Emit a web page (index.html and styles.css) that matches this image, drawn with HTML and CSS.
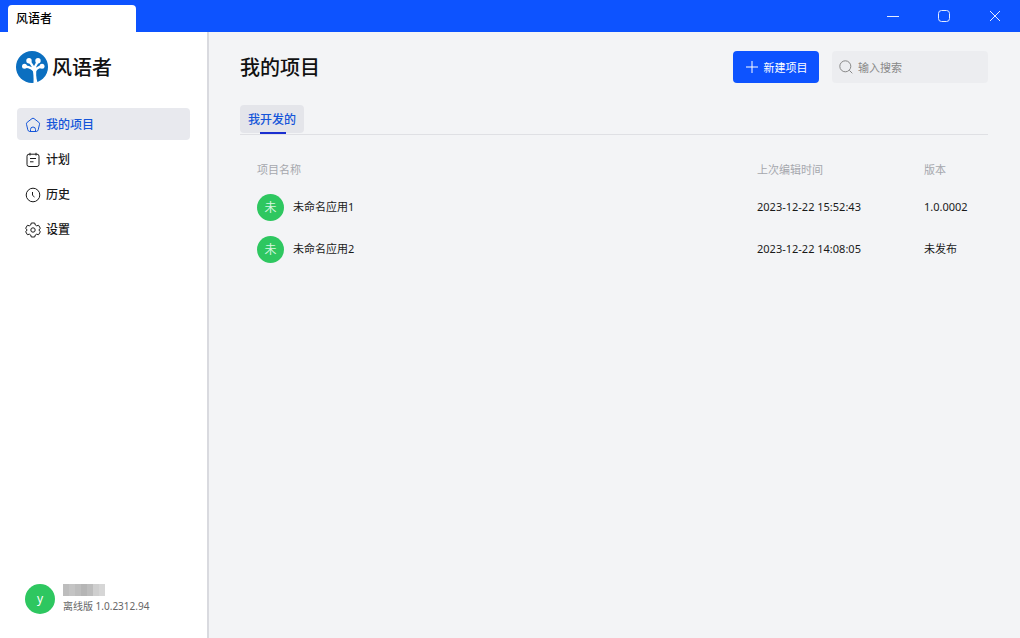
FILE: index.html
```html
<!DOCTYPE html>
<html lang="zh-CN">
<head>
    <meta charset="UTF-8">
    <meta name="viewport" content="width=device-width, initial-scale=1.0">
    <title>风语者</title>
    <link rel="stylesheet" href="styles.css">
</head>
<body>
    <header class="titlebar">
        <div class="window-tab">风语者</div>
        <div class="window-controls">
            <button type="button" aria-label="最小化">
                <svg width="14" height="14" viewBox="0 0 14 14"><path d="M1 7.5h12"/></svg>
            </button>
            <button type="button" aria-label="最大化">
                <svg width="14" height="14" viewBox="0 0 14 14"><rect x="1.5" y="1.5" width="11" height="11" rx="3"/></svg>
            </button>
            <button type="button" aria-label="关闭">
                <svg width="14" height="14" viewBox="0 0 14 14"><path d="M2 2l10 10M12 2L2 12"/></svg>
            </button>
        </div>
    </header>

    <div class="layout">
        <aside class="sidebar">
            <div class="brand">
                <svg class="brand-logo" width="32" height="32" viewBox="0 0 32 32">
                    <circle fill="#0b6fc0" cx="16" cy="16" r="16"/>
                    <path fill="#fff" d="M16.500 17h4.200c-.9 5-.7 9.500.8 14.500L20 32h-2.500c.3-5-.1-10-1-15z"/>
                    <g fill="none" stroke="#fff" stroke-width="2.400" stroke-linecap="round">
                        <path d="M18.500 20.500c-1.500-3.500-5-4.500-9.500-5M18 18.500c-.5-3.500-2.500-5-4.500-8M18.500 18.500c0-3.500 1.500-5 3.500-8M18.500 20.500c1.500-3.500 4-4.500 7.500-5"/>
                    </g>
                    <g fill="#fff">
                        <circle cx="8.500" cy="15.300" r="2.500"/>
                        <circle cx="13" cy="9.800" r="2.700"/>
                        <circle cx="22" cy="9.800" r="2.700"/>
                        <circle cx="26" cy="15.300" r="2.500"/>
                    </g>
                </svg>
                <span class="brand-name">风语者</span>
            </div>

            <nav class="menu">
                <a class="menu-item active" href="#projects">
                    <svg width="16" height="16" viewBox="0 0 16 16"><path d="M2.200 5.300L7 1.600q1-.8 2 0l4.800 3.700q1 .8.700 2l-1.300 5.500q-.4 1.700-2 1.700H4.800q-1.600 0-2-1.700L1.500 7.300q-.3-1.200.7-2z"/><path d="M5.500 14.300v-1.800a2.500 2.500 0 0 1 5 0v1.800"/></svg>
                    我的项目
                </a>
                <a class="menu-item" href="#plan">
                    <svg width="16" height="16" viewBox="0 0 16 16"><rect x="2" y="2.200" width="12" height="12.300" rx="2"/><path d="M5 .8v2.700M11 .8v2.700M5 6.500h6M5 9.800h3.500"/></svg>
                    计划
                </a>
                <a class="menu-item" href="#history">
                    <svg width="16" height="16" viewBox="0 0 16 16"><circle cx="8" cy="8" r="6.800"/><path d="M7.500 5v3.300l2 1.700"/></svg>
                    历史
                </a>
                <a class="menu-item" href="#settings">
                    <svg width="16" height="16" viewBox="0 0 16 16"><path d="M6.300 1h3.400l.6 2 1.300.8 2-.5 1.700 2.900L13.900 8l1.400 1.800-1.700 2.900-2-.5-1.300.8-.6 2H6.300l-.6-2-1.300-.8-2 .5L.7 9.800 2.100 8 .7 6.200l1.700-2.900 2 .5L5.700 3z"/><circle cx="8" cy="8" r="2.200"/></svg>
                    设置
                </a>
            </nav>

            <div class="user">
                <span class="avatar avatar-user">y</span>
                <div class="user-info">
                    <div class="user-name">
                        <i></i><i></i><i></i><i></i><i></i><i></i><i></i>
                    </div>
                    <div class="user-version">离线版 1.0.2312.94</div>
                </div>
            </div>
        </aside>

        <main class="content">
            <div class="toolbar">
                <h1>我的项目</h1>
                <button class="btn-new" type="button">
                    <svg width="14" height="14" viewBox="0 0 14 14"><path d="M7 1v12M1 7h12"/></svg>
                    新建项目
                </button>
                <label class="search">
                    <svg width="14" height="14" viewBox="0 0 14 14"><circle cx="6.300" cy="6.300" r="5.500"/><path d="M10.300 10.300l3 3"/></svg>
                    <input type="text" placeholder="输入搜索" aria-label="输入搜索">
                </label>
            </div>

            <div class="tabs">
                <button class="tab" type="button">我开发的</button>
            </div>

            <table class="projects">
                <thead>
                    <tr>
                        <th>项目名称</th>
                        <th class="col-time">上次编辑时间</th>
                        <th class="col-version">版本</th>
                    </tr>
                </thead>
                <tbody>
                    <tr>
                        <td><div class="project"><span class="avatar">未</span>未命名应用1</div></td>
                        <td>2023-12-22 15:52:43</td>
                        <td>1.0.0002</td>
                    </tr>
                    <tr>
                        <td><div class="project"><span class="avatar">未</span>未命名应用2</div></td>
                        <td>2023-12-22 14:08:05</td>
                        <td>未发布</td>
                    </tr>
                </tbody>
            </table>
        </main>
    </div>
</body>
</html>
```

FILE: styles.css
```css
* {
    box-sizing: border-box;
}
body {
    margin: 0;
    font-family: 'Noto Sans', 'Noto Sans CJK SC', sans-serif;
    font-size: 11px;
    line-height: 16px;
    color: #1a1a1a;
    background-color: #f3f4f6;
    display: flex;
    flex-direction: column;
    min-height: 100vh;
}
button, input {
    font-family: inherit;
    font-size: 11px;
    border: none;
    padding: 0;
}
button {
    cursor: pointer;
}
svg {
    flex: none;
    fill: none;
    stroke: currentColor;
}

/* Title bar */
.titlebar {
    height: 32px;
    padding-left: 8px;
    background-color: #0d53ff;
    display: flex;
    align-items: flex-end;
    justify-content: space-between;
}
.window-tab {
    width: 128px;
    height: 27px;
    padding: 0 8px;
    border-radius: 4px 4px 0 0;
    background-color: #fff;
    color: #000;
    font-size: 12px;
    font-weight: 500;
    line-height: 28px;
}
.window-controls {
    display: flex;
    height: 32px;
}
.window-controls button {
    width: 51px;
    display: flex;
    align-items: center;
    justify-content: center;
    background: none;
    color: #e4ecff;
}

/* Sidebar */
.layout {
    flex: 1;
    display: flex;
}
.sidebar {
    flex: none;
    width: 209px;
    padding: 19px 17px 24px 16px;
    border-right: 2px solid #d9dadf;
    background-color: #fff;
    display: flex;
    flex-direction: column;
}
.brand {
    height: 32px;
    display: flex;
    align-items: flex-start;
    gap: 4px;
}
.brand-logo {
    stroke: none;
}
.brand-name {
    color: #111;
    font-size: 20px;
    font-weight: 500;
    line-height: 34px;
}
.menu {
    margin-top: 25px;
    padding-left: 1px;
    display: flex;
    flex-direction: column;
    gap: 3px;
}
.menu-item {
    height: 32px;
    padding: 2px 8px 0;
    border-radius: 4px;
    display: flex;
    align-items: center;
    gap: 5px;
    color: #1a1a1a;
    font-size: 12px;
    font-weight: 500;
    text-decoration: none;
}
.menu-item.active {
    background-color: #e8e9ee;
    color: #1455d9;
}

/* User */
.avatar {
    flex: none;
    width: 27px;
    height: 27px;
    border-radius: 50%;
    background-color: #2ec760;
    color: #d8f7e2;
    font-size: 12px;
    line-height: 27px;
    text-align: center;
}
.avatar-user {
    width: 30px;
    height: 30px;
    color: #fff;
    line-height: 30px;
}
.user {
    margin-top: auto;
    padding-left: 9px;
    display: flex;
    align-items: center;
    gap: 8px;
}
.user-name {
    display: flex;
    width: 42px;
    height: 12px;
    margin-bottom: 2px;
}
.user-name i {
    flex: 1;
    background-color: #bdbdbd;
}
.user-name i:nth-child(2) {
    background-color: #c4c4c4;
}
.user-name i:nth-child(4) {
    background-color: #b5b5b5;
}
.user-name i:nth-child(6) {
    background-color: #cfcfcf;
}
.user-name i:nth-child(7) {
    background-color: #d6d6d6;
}
.user-version {
    color: #666;
    font-size: 10px;
}

/* Content */
.content {
    flex: 1;
    padding: 19px 32px 32px 31px;
}
.toolbar {
    height: 32px;
    display: flex;
    align-items: flex-start;
    gap: 13px;
}
h1 {
    flex: 1;
    margin: 0;
    color: #111;
    font-size: 20px;
    font-weight: 500;
    line-height: 34px;
}
.btn-new {
    width: 86px;
    height: 32px;
    border-radius: 4px;
    background-color: #0d53ff;
    color: #fff;
    display: flex;
    align-items: center;
    justify-content: center;
    gap: 5px;
}
.search {
    width: 156px;
    height: 32px;
    padding: 0 7px;
    border-radius: 4px;
    background-color: #ecedf0;
    color: #888;
    display: flex;
    align-items: center;
    gap: 5px;
}
.search input {
    flex: 1;
    min-width: 0;
    background: none;
    outline: none;
}
.search input::placeholder {
    color: #888;
}

/* Tabs */
.tabs {
    margin-top: 22px;
    padding-bottom: 1px;
    border-bottom: 1px solid #dfe0e4;
}
.tab {
    position: relative;
    display: block;
    height: 28px;
    padding: 0 8px;
    border-radius: 4px;
    background-color: #e4e5ea;
    color: #1455d9;
    font-size: 12px;
    font-weight: 500;
}
.tab::after {
    content: "";
    position: absolute;
    left: 20px;
    right: 18px;
    bottom: -1px;
    height: 2px;
    background-color: #1a2fd0;
}

/* Project list */
.projects {
    width: 100%;
    margin-top: 19px;
    border-collapse: collapse;
    table-layout: fixed;
}
.projects th {
    height: 32px;
    padding: 0;
    color: #a5a7ad;
    font-weight: 400;
    text-align: left;
}
.projects td {
    height: 42px;
    padding: 0;
}
.projects th:first-child,
.projects td:first-child {
    padding-left: 17px;
}
.projects .col-time {
    width: 167px;
}
.projects .col-version {
    width: 64px;
}
.project {
    display: flex;
    align-items: center;
    gap: 9px;
}
```
